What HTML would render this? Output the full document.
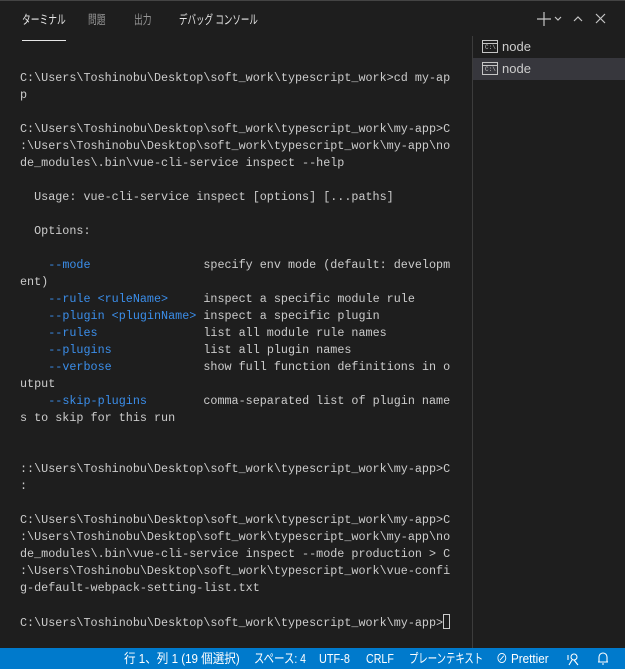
<!DOCTYPE html>
<html><head><meta charset="utf-8"><style>
*{margin:0;padding:0;box-sizing:border-box}
body{width:625px;height:669px;background:#1e1e1e;position:relative;overflow:hidden;font-family:"Liberation Sans","Noto Sans CJK JP",sans-serif}
.top{position:absolute;left:0;top:0;width:625px;height:1px;background:#444}
.tabs{position:absolute;top:10px;left:22px;height:20px;font-size:12.5px;color:#969696}
.tabs span{position:absolute;white-space:nowrap;top:-1px;transform:scaleX(0.7);transform-origin:left}
.ul{position:absolute;left:22px;top:40px;width:44px;height:1px;background:#e7e7e7}
.term{position:absolute;left:20px;top:70px;font-family:"Liberation Mono",monospace;font-size:11.75px;line-height:17px;color:#cccccc;white-space:pre}
.b{color:#3b8eea}
.div{position:absolute;left:472px;top:36px;width:1px;height:612px;background:#3c3c3c}
.item{position:absolute;left:473px;width:152px;height:22px;color:#cccccc;font-size:13px;line-height:22px}
.item .ic{position:absolute;left:9px;top:4px;width:16px;height:13px;border:1px solid #c5c5c5;}
.item .ic:before{content:"";position:absolute;left:0;right:0;top:2px;height:1px;background:#c5c5c5}
.item .ic i{position:absolute;left:2px;top:3px;font-size:6px;line-height:8px;font-style:normal;font-family:"Liberation Mono",monospace;color:#c5c5c5}
.item b{position:absolute;left:29px;font-weight:normal}
.status{position:absolute;left:0;top:648px;width:625px;height:21px;background:#007acc;color:#fff;font-size:13px;line-height:21px}
.status span{position:absolute;white-space:nowrap;top:0;transform-origin:left}
.cur{display:inline-block;width:7px;height:15px;border:1px solid #ccc;vertical-align:-3px}
</style></head><body>
<div class="top"></div>
<div class="tabs">
<span style="left:0;color:#e7e7e7">ターミナル</span>
<span style="left:66px">問題</span>
<span style="left:112px">出力</span>
<span style="left:157px;color:#e7e7e7;transform:scaleX(0.68)">デバッグ コンソール</span>
</div>
<div class="ul"></div>
<svg style="position:absolute;left:536px;top:11px" width="86" height="16" viewBox="0 0 86 16" fill="none" stroke="#c5c5c5" stroke-width="1.2">
<path d="M8 1v14M1 8h14"/><path d="M19 6l3 3 3-3"/><path d="M38 10l4-4 4 4"/><path d="M60 3l9 9M69 3l-9 9"/>
</svg>
<div class="div"></div>
<div class="item" style="top:36px"><span class="ic"><i>C:\</i></span><b>node</b></div>
<div class="item" style="top:58px;background:#37373d"><span class="ic"><i>C:\</i></span><b>node</b></div>
<div class="term">C:\Users\Toshinobu\Desktop\soft_work\typescript_work>cd my-ap
p

C:\Users\Toshinobu\Desktop\soft_work\typescript_work\my-app>C
:\Users\Toshinobu\Desktop\soft_work\typescript_work\my-app\no
de_modules\.bin\vue-cli-service inspect --help

  Usage: vue-cli-service inspect [options] [...paths]

  Options:

    <span class="b">--mode</span>                specify env mode (default: developm
ent)
    <span class="b">--rule &lt;ruleName&gt;</span>     inspect a specific module rule
    <span class="b">--plugin &lt;pluginName&gt;</span> inspect a specific plugin
    <span class="b">--rules</span>               list all module rule names
    <span class="b">--plugins</span>             list all plugin names
    <span class="b">--verbose</span>             show full function definitions in o
utput
    <span class="b">--skip-plugins</span>        comma-separated list of plugin name
s to skip for this run


::\Users\Toshinobu\Desktop\soft_work\typescript_work\my-app>C
:

C:\Users\Toshinobu\Desktop\soft_work\typescript_work\my-app>C
:\Users\Toshinobu\Desktop\soft_work\typescript_work\my-app\no
de_modules\.bin\vue-cli-service inspect --mode production > C
:\Users\Toshinobu\Desktop\soft_work\typescript_work\vue-confi
g-default-webpack-setting-list.txt

C:\Users\Toshinobu\Desktop\soft_work\typescript_work\my-app><span class="cur"></span></div>
<div class="status">
<span style="left:124px;transform:scaleX(0.89)">行 1、列 1 (19 個選択)</span>
<span style="left:254px;transform:scaleX(0.8)">スペース: 4</span>
<span style="left:319px;transform:scaleX(0.84)">UTF-8</span>
<span style="left:366px;transform:scaleX(0.82)">CRLF</span>
<span style="left:409px;transform:scaleX(0.72)">プレーンテキスト</span>
<span style="left:496px;transform:scaleX(0.9)">⊘ Prettier</span>
<svg style="position:absolute;left:566px;top:4px" width="14" height="14" fill="none" stroke="#fff" stroke-width="1.1"><circle cx="8" cy="5" r="3"/><path d="M3 13l3-5M8 8l4 5M2 3v5"/></svg>
<svg style="position:absolute;left:597px;top:3px" width="12" height="15" fill="none" stroke="#fff" stroke-width="1.1"><path d="M2 11V6a4 4 0 0 1 8 0v5zM1 11h10M5 13h2"/></svg>
</div>
</body></html>
